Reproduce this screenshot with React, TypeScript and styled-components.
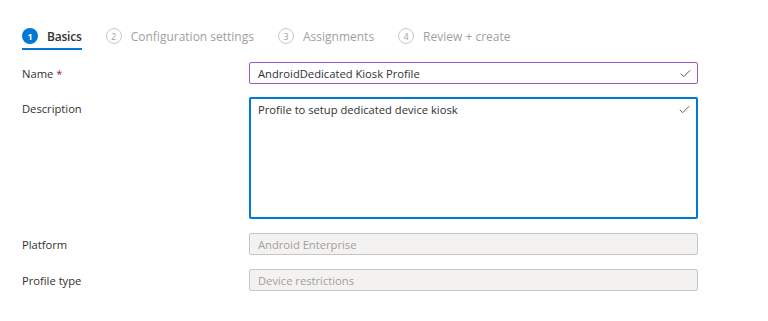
import styled, { createGlobalStyle } from "styled-components";

const GlobalStyle = createGlobalStyle`
  html, body {
    margin: 0;
    padding: 0;
    background: #ffffff;
  }
  body {
    font-family: "Open Sans", "Noto Sans", "Liberation Sans", sans-serif;
    font-size: 11.2px;
    color: #323130;
  }
`;

const Page = styled.div`
  width: 768px;
  height: 321px;
  box-sizing: border-box;
  padding: 26px 0 0 22px;
`;

const Steps = styled.div`
  display: flex;
  align-items: flex-start;
  gap: 24px;
  margin-bottom: 12px;
`;

const Step = styled.div<{ $active?: boolean }>`
  display: flex;
  align-items: center;
  gap: 9px;
  height: 20px;
  padding-bottom: 2px;
  border-bottom: 2px solid ${p => (p.$active ? "#0078d4" : "transparent")};
  color: ${p => (p.$active ? "#323130" : "#a19f9d")};
  font-size: 12px;
  font-weight: ${p => (p.$active ? 600 : 400)};
  letter-spacing: ${p => (p.$active ? "-0.2px" : "0")};
`;

const StepNum = styled.span<{ $active?: boolean }>`
  width: 16px;
  height: 16px;
  box-sizing: border-box;
  border-radius: 50%;
  display: flex;
  align-items: center;
  justify-content: center;
  font-size: 9px;
  letter-spacing: 0;
  font-weight: ${p => (p.$active ? 700 : 400)};
  background: ${p => (p.$active ? "#0078d4" : "transparent")};
  color: ${p => (p.$active ? "#ffffff" : "#a19f9d")};
  border: ${p => (p.$active ? "none" : "1px solid #c8c6c4")};
`;

const Form = styled.div`
  display: flex;
  flex-direction: column;
  gap: 14px;
  width: 676px;
`;

const Row = styled.div<{ $top?: boolean }>`
  display: flex;
  align-items: ${p => (p.$top ? "flex-start" : "center")};
  margin-top: ${p => (p.$top ? "-1px" : "0")};
`;

const Label = styled.div<{ $top?: boolean }>`
  width: 227px;
  flex-shrink: 0;
  color: #323130;
  padding-top: ${p => (p.$top ? "4px" : "0")};
`;

const Required = styled.span`
  color: #a4262c;
  margin-left: 3px;
`;

const Field = styled.div<{ $variant: "valid" | "focus" | "disabled"; $tall?: boolean }>`
  flex: 1;
  position: relative;
  box-sizing: border-box;
  height: ${p => (p.$tall ? "122px" : "22px")};
  padding: ${p => (p.$variant === "focus" ? "3px 7px" : "0 8px")};
  display: flex;
  align-items: ${p => (p.$tall ? "flex-start" : "center")};
  background: ${p => (p.$variant === "disabled" ? "#f3f2f1" : "#ffffff")};
  color: ${p => (p.$variant === "disabled" ? "#a19f9d" : "#323130")};
  border: ${p =>
    p.$variant === "focus"
      ? "2px solid #0078d4"
      : p.$variant === "valid"
      ? "1px solid #9b59c4"
      : "1px solid #c8c6c4"};
  border-radius: 2px;
`;

const Check = styled.svg`
  position: absolute;
  right: 6px;
  top: 6px;
  width: 11px;
  height: 9px;
`;

function CheckMark() {
  return (
    <Check viewBox="0 0 11 9">
      <path d="M0.8 4.8 L3.8 7.6 L10.2 1.2" fill="none" stroke="#605e5c" strokeWidth="1" />
    </Check>
  );
}

const steps = ["Basics", "Configuration settings", "Assignments", "Review + create"];

export default function App() {
  return (
    <Page>
      <GlobalStyle />
      <Steps>
        {steps.map((s, i) => (
          <Step key={s} $active={i === 0}>
            <StepNum $active={i === 0}>{i + 1}</StepNum>
            {s}
          </Step>
        ))}
      </Steps>
      <Form>
        <Row>
          <Label>
            Name<Required>*</Required>
          </Label>
          <Field $variant="valid">
            AndroidDedicated Kiosk Profile
            <CheckMark />
          </Field>
        </Row>
        <Row $top>
          <Label $top>Description</Label>
          <Field $variant="focus" $tall>
            Profile to setup dedicated device kiosk
            <CheckMark />
          </Field>
        </Row>
        <Row>
          <Label>Platform</Label>
          <Field $variant="disabled">Android Enterprise</Field>
        </Row>
        <Row>
          <Label>Profile type</Label>
          <Field $variant="disabled">Device restrictions</Field>
        </Row>
      </Form>
    </Page>
  );
}
